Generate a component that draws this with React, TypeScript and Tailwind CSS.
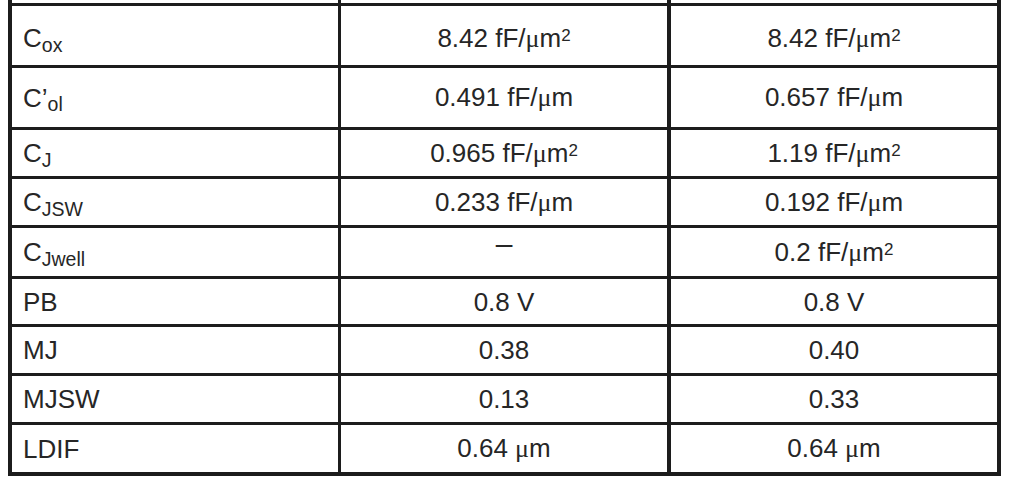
const mu = <span className="font-['Liberation_Serif',serif]">μ</span>;
const sq = <span className="relative top-[-6px] text-[17px] leading-none">2</span>;

type Row = {
  h: string;
  pad?: string;
  name: React.ReactNode;
  a: React.ReactNode;
  b: React.ReactNode;
};

const rows: Row[] = [
  {
    h: "h-[62px]",
    pad: "pt-[5px]",
    name: <>C<sub>ox</sub></>,
    a: <>8.42 fF/{mu}m{sq}</>,
    b: <>8.42 fF/{mu}m{sq}</>,
  },
  {
    h: "h-[62px]",
    name: <>C’<sub>ol</sub></>,
    a: <>0.491 fF/{mu}m</>,
    b: <>0.657 fF/{mu}m</>,
  },
  {
    h: "h-[49px]",
    name: <>C<sub>J</sub></>,
    a: <>0.965 fF/{mu}m{sq}</>,
    b: <>1.19 fF/{mu}m{sq}</>,
  },
  {
    h: "h-[49px]",
    name: <>C<sub>JSW</sub></>,
    a: <>0.233 fF/{mu}m</>,
    b: <>0.192 fF/{mu}m</>,
  },
  {
    h: "h-[51px]",
    name: <>C<sub>Jwell</sub></>,
    a: <span className="relative top-[-8px] text-[30px]">–</span>,
    b: <>0.2 fF/{mu}m{sq}</>,
  },
  { h: "h-[48px]", name: "PB", a: "0.8 V", b: "0.8 V" },
  { h: "h-[49px]", name: "MJ", a: "0.38", b: "0.40" },
  { h: "h-[49px]", name: "MJSW", a: "0.13", b: "0.33" },
  { h: "h-[50px]", name: "LDIF", a: <>0.64 {mu}m</>, b: <>0.64 {mu}m</> },
];

export default function App() {
  return (
    <div className="w-[1011px] h-[492px] bg-white font-['Liberation_Sans',Arial,sans-serif] text-[26px] leading-[30px] text-[#262626]">
      <div className="ml-[8px] w-[993px] border-x-4 border-b-4 border-[#1c1c1c]">
        {/* cut-off header row */}
        <div className="flex h-[3px]">
          <div className="w-[326px]" />
          <div className="w-[329px] border-l-[3px] border-[#1c1c1c]" />
          <div className="w-[330px] border-l-4 border-[#1c1c1c]" />
        </div>

        {rows.map((r, i) => (
          <div key={i} className={`flex border-t-[3px] border-[#1c1c1c] ${r.h}`}>
            <div className={`w-[326px] flex items-center pl-[11px] ${r.pad ?? ""}`}>
              <span>{r.name}</span>
            </div>
            <div className={`w-[329px] flex items-center justify-center border-l-[3px] border-[#1c1c1c] ${r.pad ?? ""}`}>
              <span>{r.a}</span>
            </div>
            <div className={`w-[330px] flex items-center justify-center border-l-4 border-[#1c1c1c] ${r.pad ?? ""}`}>
              <span>{r.b}</span>
            </div>
          </div>
        ))}
      </div>
    </div>
  );
}
